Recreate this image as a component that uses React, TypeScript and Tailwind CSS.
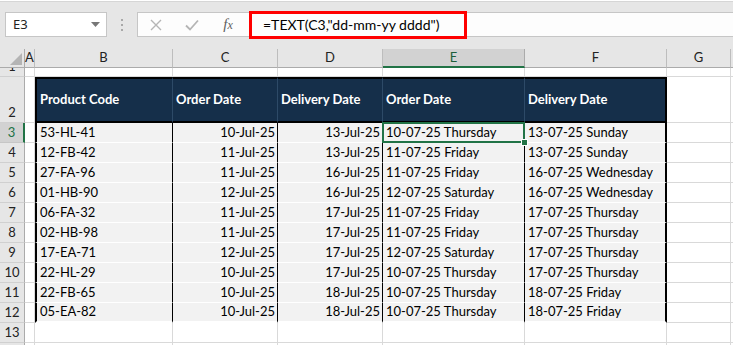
import React from "react";

type Row = [string, string, string, string, string];

const rows: Row[] = [
  ["53-HL-41", "10-Jul-25", "13-Jul-25", "10-07-25 Thursday", "13-07-25 Sunday"],
  ["12-FB-42", "11-Jul-25", "13-Jul-25", "11-07-25 Friday", "13-07-25 Sunday"],
  ["27-FA-96", "11-Jul-25", "16-Jul-25", "11-07-25 Friday", "16-07-25 Wednesday"],
  ["01-HB-90", "12-Jul-25", "16-Jul-25", "12-07-25 Saturday", "16-07-25 Wednesday"],
  ["06-FA-32", "11-Jul-25", "17-Jul-25", "11-07-25 Friday", "17-07-25 Thursday"],
  ["02-HB-98", "11-Jul-25", "17-Jul-25", "11-07-25 Friday", "17-07-25 Thursday"],
  ["17-EA-71", "12-Jul-25", "17-Jul-25", "12-07-25 Saturday", "17-07-25 Thursday"],
  ["22-HL-29", "10-Jul-25", "17-Jul-25", "10-07-25 Thursday", "17-07-25 Thursday"],
  ["22-FB-65", "10-Jul-25", "18-Jul-25", "10-07-25 Thursday", "18-07-25 Friday"],
  ["05-EA-82", "10-Jul-25", "18-Jul-25", "10-07-25 Thursday", "18-07-25 Friday"],
];

// column widths for A..G and the bit after G
const W = {
  A: "w-[10px]",
  B: "w-[138px]",
  C: "w-[105px]",
  D: "w-[105px]",
  E: "w-[142px]",
  F: "w-[142px]",
  G: "w-[64px]",
};

const grid = "border-r border-b border-[#d9d9d9]";

function RowHead({ n, h, active }: { n: number; h: string; active?: boolean }) {
  return (
    <div
      className={
        "w-[25px] shrink-0 flex items-end justify-center overflow-hidden border-b text-[13px] leading-[19px] " +
        h +
        (active
          ? " bg-[#d2d2d2] text-[#217346] border-b-[#c6c6c6] border-r-2 border-r-[#217346]"
          : " bg-[#e6e6e6] text-[#222] border-b-[#d0d0d0] border-r border-r-[#ababab]")
      }
    >
      {n}
    </div>
  );
}

function Toolbar() {
  return (
    <div className="h-[48px] bg-[#e6e6e6] border-t border-[#d6d6d6] mt-[1px] flex items-start pt-[10px]">
      {/* name box */}
      <div className="ml-[5px] w-[102px] h-[25px] bg-white border border-[#c6c6c6] flex items-center pl-[7px] pr-[6px] font-['Noto_Sans',sans-serif] text-[13px] text-[#222]">
        <span className="flex-1">E3</span>
        <svg width="9" height="5" viewBox="0 0 9 5">
          <path d="M0 0h9L4.5 5z" fill="#777" />
        </svg>
      </div>
      {/* dots */}
      <div className="w-[30px] h-[25px] flex flex-col items-center justify-center gap-[3px]">
        <div className="w-[2px] h-[2px] bg-[#a8a8a8]" />
        <div className="w-[2px] h-[2px] bg-[#a8a8a8]" />
        <div className="w-[2px] h-[2px] bg-[#a8a8a8]" />
      </div>
      {/* formula bar */}
      <div className="flex-1 h-[25px] bg-[#fdfdfd] border-y border-l border-[#c6c6c6] flex items-center">
        <div className="w-[111px] flex items-center">
          <div className="w-[36px] flex justify-center">
            <svg width="12" height="12" viewBox="0 0 12 12">
              <path d="M1 1l10 10M11 1L1 11" stroke="#b5b5b5" strokeWidth="1.4" />
            </svg>
          </div>
          <div className="w-[36px] flex justify-center">
            <svg width="14" height="12" viewBox="0 0 14 12">
              <path d="M1 6.5l4 4L13 1.5" stroke="#b5b5b5" strokeWidth="1.8" fill="none" />
            </svg>
          </div>
          <div className="w-[36px] flex justify-center">
            <span className="font-['Liberation_Serif',serif] italic text-[15px] text-[#5f5f5f] leading-none">
              f<span className="text-[12px]">x</span>
            </span>
          </div>
        </div>
        <div className="w-[218px] h-[28px] border-[3px] border-[#ff0000] flex items-center pl-[11px] font-['Lato',sans-serif] text-[14px] text-black">
          =TEXT(C3,"dd-mm-yy dddd")
        </div>
      </div>
    </div>
  );
}

function ColHeaders() {
  const letters: [string, string][] = [
    ["A", W.A],
    ["B", W.B],
    ["C", W.C],
    ["D", W.D],
    ["E", W.E],
    ["F", W.F],
    ["G", W.G],
  ];
  return (
    <div className="h-[19px] flex bg-[#e6e6e6] text-[13px]">
      <div className="w-[25px] shrink-0 border-r border-b border-[#ababab] flex items-end justify-end p-[2px]">
        <svg width="12" height="12" viewBox="0 0 12 12">
          <path d="M12 0V12H0z" fill="#b4b4b4" />
        </svg>
      </div>
      {letters.map(([l, w]) =>
        l === "E" ? (
          <div
            key={l}
            className={w + " shrink-0 flex items-center justify-center bg-[#d2d2d2] text-[#1d5e3a] border-r border-r-[#ababab] border-b-2 border-b-[#217346]"}
          >
            {l}
          </div>
        ) : (
          <div
            key={l}
            className={w + " shrink-0 flex items-center justify-center text-[#222] border-r border-r-[#bdbdbd] border-b border-b-[#ababab]"}
          >
            {l}
          </div>
        )
      )}
      <div className="flex-1 border-b border-[#ababab]" />
    </div>
  );
}

function BlankRow({ n, h }: { n: number; h: string }) {
  return (
    <div className={"flex " + h}>
      <RowHead n={n} h={h} />
      <div className={W.A + " shrink-0 " + grid} />
      <div className={W.B + " shrink-0 " + grid} />
      <div className={W.C + " shrink-0 " + grid} />
      <div className={W.D + " shrink-0 " + grid} />
      <div className={W.E + " shrink-0 " + grid} />
      <div className={W.F + " shrink-0 " + grid} />
      <div className={W.G + " shrink-0 " + grid} />
      <div className="flex-1 border-b border-[#d9d9d9]" />
    </div>
  );
}

export default function App() {
  const head = "shrink-0 flex items-center px-[3px] bg-[#152f4a] text-white font-bold border-t-2 border-b-2 border-black";
  const body = "shrink-0 flex items-center bg-[#f2f2f2] border-b border-b-white whitespace-nowrap overflow-visible";

  return (
    <div className="w-[733px] h-[345px] overflow-hidden bg-white font-['Lato',sans-serif] text-black">
      <Toolbar />
      <ColHeaders />
      <BlankRow n={1} h="h-[9px]" />

      {/* row 2: table header */}
      <div className="flex h-[46px] text-[13px]">
        <RowHead n={2} h="h-[46px]" />
        <div className={W.A + " shrink-0 border-r border-b border-[#d9d9d9]"} />
        <div className={W.B + " " + head + " border-l-2 border-r border-r-[#2d4a67]"}>Product Code</div>
        <div className={W.C + " " + head + " border-r border-r-[#2d4a67]"}>Order Date</div>
        <div className={W.D + " " + head + " border-r border-r-[#2d4a67]"}>Delivery Date</div>
        <div className={W.E + " " + head + " border-r border-r-[#2d4a67]"}>Order Date</div>
        <div className={W.F + " " + head + " border-r-2"}>Delivery Date</div>
        <div className={W.G + " shrink-0 " + grid} />
        <div className="flex-1 border-b border-[#d9d9d9]" />
      </div>

      {rows.map((r, i) => {
        const last = i === rows.length - 1;
        const b = body + (last ? " border-b-2 border-b-black" : "");
        return (
          <div key={i} className="flex h-[20px] text-[13px]">
            <RowHead n={i + 3} h="h-[20px]" active={i === 0} />
            <div className={W.A + " shrink-0 " + grid} />
            <div className={W.B + " " + b + " pl-[3px] border-l-2 border-l-black border-r border-r-black"}>{r[0]}</div>
            <div className={W.C + " " + b + " justify-end pr-[2px] border-r border-r-black"}>{r[1]}</div>
            <div className={W.D + " " + b + " justify-end pr-[2px] border-r border-r-black"}>{r[2]}</div>
            <div className={W.E + " " + b + " relative pl-[3px] border-r border-r-black"}>
              {r[3]}
              {i === 0 && (
                <>
                  <div className="absolute -left-px -top-px -right-px -bottom-px border-2 border-[#217346] z-10" />
                  <div className="absolute -right-[4px] -bottom-[4px] w-[7px] h-[7px] bg-[#217346] border border-white z-20" />
                </>
              )}
            </div>
            <div className={W.F + " " + b + " pl-[3px] border-r-2 border-r-black"}>{r[4]}</div>
            <div className={W.G + " shrink-0 " + grid} />
            <div className="flex-1 border-b border-[#d9d9d9]" />
          </div>
        );
      })}

      <BlankRow n={13} h="h-[20px]" />
      <BlankRow n={14} h="h-[20px]" />
    </div>
  );
}
